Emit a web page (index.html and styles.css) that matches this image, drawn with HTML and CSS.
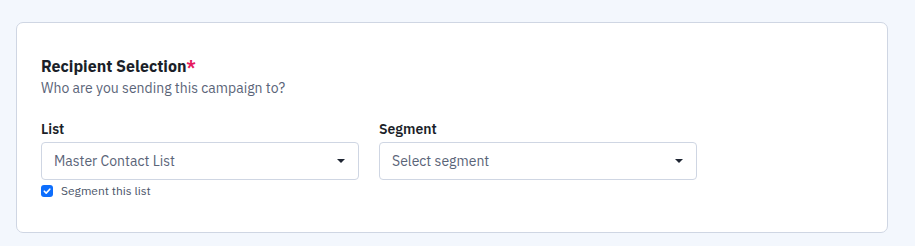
FILE: index.html
```html
<!DOCTYPE html>
<html>
<head>
<meta charset="utf-8">
<link rel="stylesheet" href="styles.css">
</head>
<body>
<div class="card">
  <div class="head">
    <h2 class="title">Recipient Selection<span class="req">*</span></h2>
    <p class="sub">Who are you sending this campaign to?</p>
  </div>
  <div class="fields">
    <div class="field">
      <label class="label">List</label>
      <div class="select">
        <span class="value">Master Contact List</span>
        <svg class="caret" width="8" height="4" viewBox="0 0 8 4"><path d="M0 0h8L4 4z" fill="#1f2633"/></svg>
      </div>
      <div class="check">
        <span class="box"><svg width="10" height="10" viewBox="0 0 10 10"><path d="M2.3 5.2l1.9 1.9 3.6-3.9" fill="none" stroke="#fff" stroke-width="1.6" stroke-linecap="round" stroke-linejoin="round"/></svg></span>
        <span class="check-text">Segment this list</span>
      </div>
    </div>
    <div class="field">
      <label class="label">Segment</label>
      <div class="select">
        <span class="value">Select segment</span>
        <svg class="caret" width="8" height="4" viewBox="0 0 8 4"><path d="M0 0h8L4 4z" fill="#1f2633"/></svg>
      </div>
    </div>
  </div>
</div>
</body>
</html>
```
FILE: styles.css
```css
html, body {
  margin: 0;
  padding: 0;
  background: #f3f7fd;
  font-family: "IBM Plex Sans", "Liberation Sans", Arial, sans-serif;
}
body {
  padding: 22px 28px 0 16px;
}
.card {
  box-sizing: border-box;
  width: 872px;
  height: 211px;
  background: #fff;
  border: 1px solid #cfd6e3;
  border-radius: 7px;
  padding: 31px 24px 0;
}
.title {
  margin: 0;
  font-size: 16px;
  line-height: 24px;
  font-weight: 700;
  color: #1b1f29;
}
.req {
  color: #e5195e;
}
.sub {
  margin: 0;
  font-size: 14px;
  line-height: 20px;
  color: #5a6478;
}
.fields {
  display: flex;
  gap: 20px;
  margin-top: 21px;
}
.field {
  width: 318px;
  display: flex;
  flex-direction: column;
}
.label {
  font-size: 14px;
  line-height: 20px;
  font-weight: 600;
  color: #1b1f29;
  margin-bottom: 3px;
}
.select {
  height: 38px;
  box-sizing: border-box;
  border: 1px solid #cfd6e3;
  border-radius: 4px;
  display: flex;
  align-items: center;
  justify-content: space-between;
  padding: 0 12px;
}
.value {
  font-size: 14px;
  color: #5a6478;
}
.caret {
  margin-right: 1px;
}
.check {
  display: flex;
  align-items: center;
  gap: 8px;
  margin-top: 3px;
}
.box {
  width: 12px;
  height: 12px;
  border-radius: 3px;
  background: #0d6efd;
  display: flex;
  align-items: center;
  justify-content: center;
}
.check-text {
  font-size: 12px;
  line-height: 16px;
  color: #4a5468;
}
```
